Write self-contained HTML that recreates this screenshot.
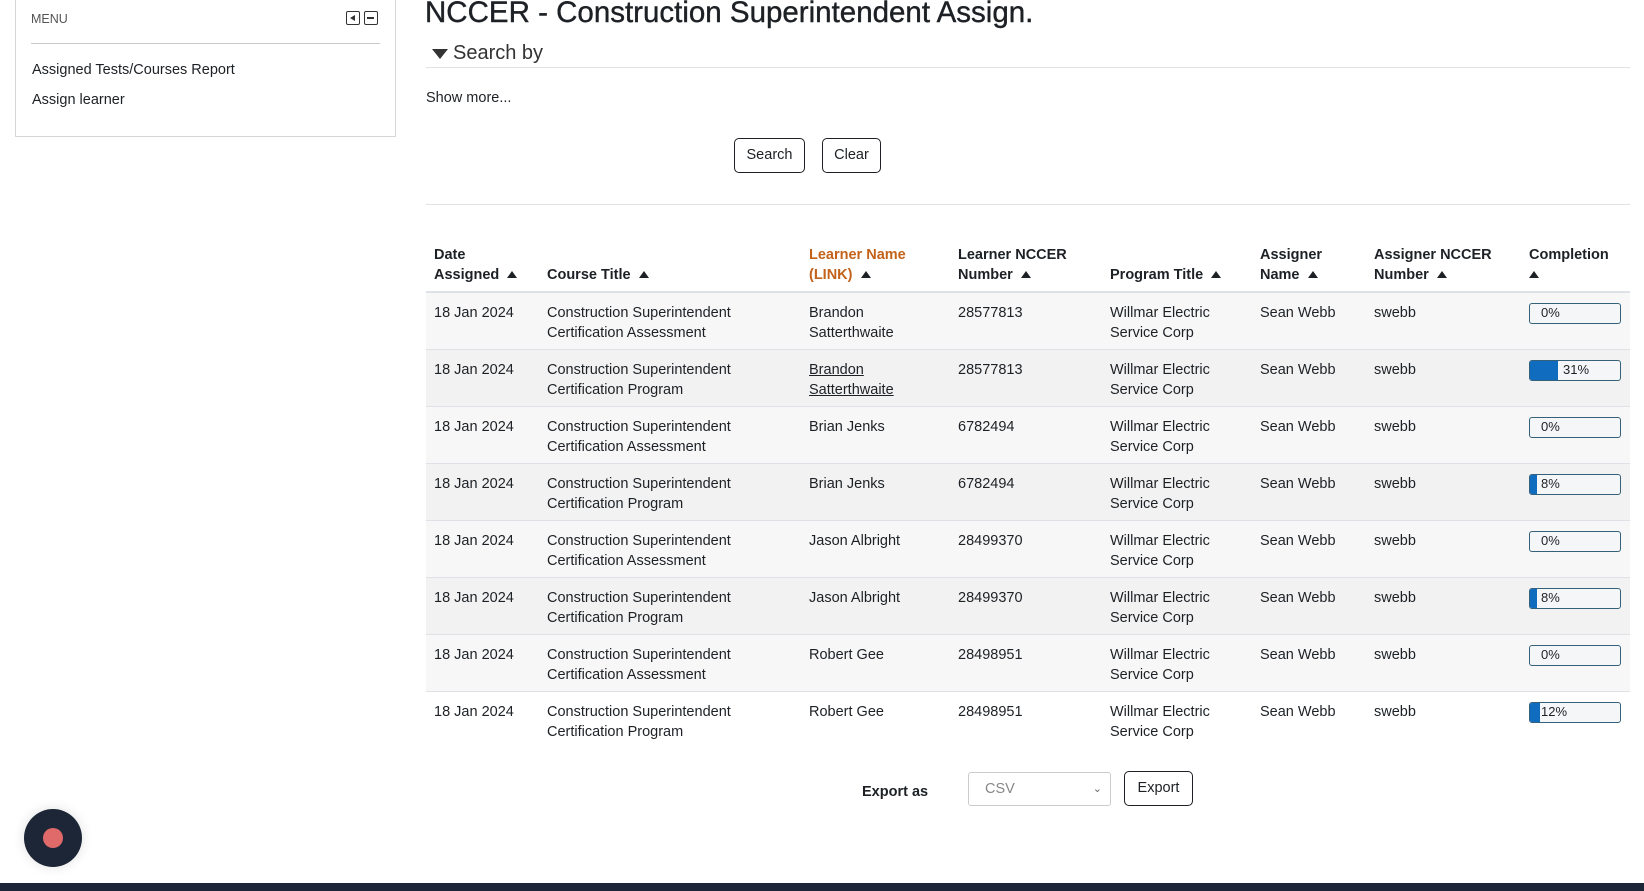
<!DOCTYPE html>
<html><head><meta charset="utf-8"><style>
*{box-sizing:border-box;margin:0;padding:0}
body{width:1644px;height:891px;overflow:hidden;background:#fff;font-family:"Liberation Sans",Arial,sans-serif;color:#1d2125;font-size:14.5px;position:relative}
.abs{position:absolute}
.menu{left:15px;top:-2px;width:381px;height:139px;border:1px solid #d6d6d6}
.btn{position:absolute;border:1px solid #1d2125;border-radius:5px;background:#fff;font-size:14.5px;text-align:center;line-height:33px;height:35px}
table{position:absolute;left:426px;top:240px;width:1204px;border-collapse:collapse}
th{font-weight:bold;text-align:left;vertical-align:bottom;padding:0 8px 6px 8px;line-height:20px;font-size:14.5px;border-bottom:2px solid #dee2e6;height:52px}
td{vertical-align:top;padding:10px 8px 0 8px;line-height:20px;height:57px;border-top:1px solid #dee2e6;background:#f7f7f7}
tr.alt td{background:#f2f2f2}
.up{display:inline-block;width:0;height:0;border-left:5px solid transparent;border-right:5px solid transparent;border-bottom:7px solid #1d2125;margin-left:8px;vertical-align:1px}
.bar{width:92px;height:21px;border:1.5px solid #35617a;border-radius:3px;background:#f4f6f8;position:relative;font-size:13px;line-height:18px;overflow:hidden}
.bar i{position:absolute;left:0;top:0;bottom:0;background:#0f6cbf}
.bar span{position:absolute;left:11px;top:0}
</style></head><body>
<div class="abs menu"></div>
<div class="abs" style="left:31px;top:12px;font-size:12.5px;color:#555">MENU</div>
<div class="abs" style="left:346px;top:11px;width:14px;height:14px;border:1.5px solid #333;border-radius:2px"><div style="position:absolute;left:3px;top:2.5px;border-top:3.5px solid transparent;border-bottom:3.5px solid transparent;border-right:5px solid #333"></div></div>
<div class="abs" style="left:364px;top:11px;width:14px;height:14px;border:1.5px solid #333;border-radius:2px"><div style="position:absolute;left:2px;top:5px;width:7px;height:1.5px;background:#333"></div></div>
<div class="abs" style="left:31px;top:43px;width:349px;height:1px;background:#c8c8c8"></div>
<div class="abs" style="left:32px;top:62px">Assigned Tests/Courses Report</div>
<div class="abs" style="left:32px;top:92px">Assign learner</div>

<div class="abs" style="left:425px;top:-4px;font-size:29.5px;line-height:34px;-webkit-text-stroke:0.4px #1d2125">NCCER - Construction Superintendent Assign.</div>
<div class="abs" style="left:432px;top:49px;border-left:8px solid transparent;border-right:8px solid transparent;border-top:10px solid #333"></div>
<div class="abs" style="left:453px;top:40px;font-size:20px;line-height:26px;color:#333">Search by</div>
<div class="abs" style="left:426px;top:67px;width:1204px;height:1px;background:#e2e2e2"></div>
<div class="abs" style="left:426px;top:90px">Show more...</div>
<div class="btn" style="left:734px;top:138px;width:71px">Search</div>
<div class="btn" style="left:822px;top:138px;width:59px">Clear</div>
<div class="abs" style="left:426px;top:204px;width:1204px;height:1px;background:#e2e2e2"></div>

<table>
<tr><th style="width:113px">Date<br>Assigned<span class="up"></span></th><th style="width:262px">Course Title<span class="up"></span></th><th style="width:149px;color:#c3621a">Learner Name<br>(LINK)<span class="up"></span></th><th style="width:152px">Learner NCCER<br>Number<span class="up"></span></th><th style="width:150px">Program Title<span class="up"></span></th><th style="width:114px">Assigner<br>Name<span class="up"></span></th><th style="width:155px">Assigner NCCER<br>Number<span class="up"></span></th><th>Completion<br><span class="up" style="margin-left:0"></span></th></tr>
<tr><td>18 Jan 2024</td><td>Construction Superintendent<br>Certification Assessment</td><td>Brandon<br>Satterthwaite</td><td>28577813</td><td>Willmar Electric<br>Service Corp</td><td>Sean Webb</td><td>swebb</td><td><div class="bar"><span>0%</span></div></td></tr>
<tr class="alt"><td>18 Jan 2024</td><td>Construction Superintendent<br>Certification Program</td><td><u>Brandon<br>Satterthwaite</u></td><td>28577813</td><td>Willmar Electric<br>Service Corp</td><td>Sean Webb</td><td>swebb</td><td><div class="bar"><i style="width:28px"></i><span style="left:33px">31%</span></div></td></tr>
<tr><td>18 Jan 2024</td><td>Construction Superintendent<br>Certification Assessment</td><td>Brian Jenks</td><td>6782494</td><td>Willmar Electric<br>Service Corp</td><td>Sean Webb</td><td>swebb</td><td><div class="bar"><span>0%</span></div></td></tr>
<tr class="alt"><td>18 Jan 2024</td><td>Construction Superintendent<br>Certification Program</td><td>Brian Jenks</td><td>6782494</td><td>Willmar Electric<br>Service Corp</td><td>Sean Webb</td><td>swebb</td><td><div class="bar"><i style="width:7px"></i><span>8%</span></div></td></tr>
<tr><td>18 Jan 2024</td><td>Construction Superintendent<br>Certification Assessment</td><td>Jason Albright</td><td>28499370</td><td>Willmar Electric<br>Service Corp</td><td>Sean Webb</td><td>swebb</td><td><div class="bar"><span>0%</span></div></td></tr>
<tr class="alt"><td>18 Jan 2024</td><td>Construction Superintendent<br>Certification Program</td><td>Jason Albright</td><td>28499370</td><td>Willmar Electric<br>Service Corp</td><td>Sean Webb</td><td>swebb</td><td><div class="bar"><i style="width:7px"></i><span>8%</span></div></td></tr>
<tr><td>18 Jan 2024</td><td>Construction Superintendent<br>Certification Assessment</td><td>Robert Gee</td><td>28498951</td><td>Willmar Electric<br>Service Corp</td><td>Sean Webb</td><td>swebb</td><td><div class="bar"><span>0%</span></div></td></tr>
<tr class="alt"><td style="background:#fff">18 Jan 2024</td><td style="background:#fff">Construction Superintendent<br>Certification Program</td><td style="background:#fff">Robert Gee</td><td style="background:#fff">28498951</td><td style="background:#fff">Willmar Electric<br>Service Corp</td><td style="background:#fff">Sean Webb</td><td style="background:#fff">swebb</td><td style="background:#fff"><div class="bar"><i style="width:10px"></i><span>12%</span></div></td></tr>
</table>

<div class="abs" style="left:862px;top:784px;font-weight:bold">Export as</div>
<div class="abs" style="left:968px;top:772px;width:143px;height:34px;border:1px solid #ccc;border-radius:3px;color:#888;padding:0 16px;line-height:32px">CSV<span style="position:absolute;right:8px;top:0;font-size:11px;color:#666">&#8964;</span></div>
<div class="btn" style="left:1124px;top:771px;width:69px">Export</div>

<div class="abs" style="left:24px;top:809px;width:58px;height:58px;border-radius:50%;background:#1c2636;box-shadow:0 0 12px rgba(0,0,0,.12)"></div>
<div class="abs" style="left:43px;top:828px;width:20px;height:20px;border-radius:50%;background:#e06a6a"></div>
<div class="abs" style="left:0;top:883px;width:1644px;height:8px;background:#1c2636"></div>
</body></html>
